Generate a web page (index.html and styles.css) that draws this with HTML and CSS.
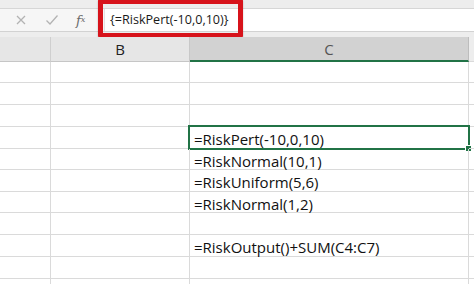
FILE: index.html
```html
<!DOCTYPE html>
<html>
<head>
<meta charset="utf-8">
<link rel="stylesheet" href="styles.css">
</head>
<body>
<div class="page">
  <div class="fbar">
    <div class="fbar-strip">
      <div class="fbar-icons">
        <span class="ic ic-x"><svg width="12" height="12" viewBox="0 0 12 12"><path d="M2 2L10 10M10 2L2 10" stroke="#b3b3b3" stroke-width="1.3" fill="none"/></svg></span>
        <span class="ic ic-check"><svg width="14" height="12" viewBox="0 0 14 12"><path d="M1.5 6.5L5 10L12.5 1.5" stroke="#b3b3b3" stroke-width="1.3" fill="none"/></svg></span>
        <span class="ic ic-fx"><i>f</i><sub>x</sub></span>
      </div>
      <div class="fbar-input">{=RiskPert(-10,0,10)}</div>
    </div>
    <div class="redbox"></div>
  </div>
  <div class="sheet">
    <div class="row hdr">
      <div class="cell ca"></div>
      <div class="cell cb">B</div>
      <div class="cell cc sel">C</div>
      <div class="cell cd"></div>
    </div>
    <div class="row h21"><div class="cell ca"></div><div class="cell cb"></div><div class="cell cc"></div><div class="cell cd"></div></div>
    <div class="row h22"><div class="cell ca"></div><div class="cell cb"></div><div class="cell cc"></div><div class="cell cd"></div></div>
    <div class="row h22"><div class="cell ca"></div><div class="cell cb"></div><div class="cell cc"></div><div class="cell cd"></div></div>
    <div class="row h22"><div class="cell ca"></div><div class="cell cb"></div><div class="cell cc active">=RiskPert(-10,0,10)<span class="selbox"><span class="handle"></span></span></div><div class="cell cd"></div></div>
    <div class="row h21"><div class="cell ca"></div><div class="cell cb"></div><div class="cell cc">=RiskNormal(10,1)</div><div class="cell cd"></div></div>
    <div class="row h22"><div class="cell ca"></div><div class="cell cb"></div><div class="cell cc">=RiskUniform(5,6)</div><div class="cell cd"></div></div>
    <div class="row h21"><div class="cell ca"></div><div class="cell cb"></div><div class="cell cc">=RiskNormal(1,2)</div><div class="cell cd"></div></div>
    <div class="row h22"><div class="cell ca"></div><div class="cell cb"></div><div class="cell cc"></div><div class="cell cd"></div></div>
    <div class="row h22"><div class="cell ca"></div><div class="cell cb"></div><div class="cell cc">=RiskOutput()+SUM(C4:C7)</div><div class="cell cd"></div></div>
    <div class="row h22"><div class="cell ca"></div><div class="cell cb"></div><div class="cell cc"></div><div class="cell cd"></div></div>
    <div class="row h22"><div class="cell ca"></div><div class="cell cb"></div><div class="cell cc"></div><div class="cell cd"></div></div>
  </div>
</div>
</body>
</html>
```
FILE: styles.css
```css
html, body {
  margin: 0;
  padding: 0;
  background: #ffffff;
}
.page {
  width: 474px;
  height: 284px;
  overflow: hidden;
  font-family: "Open Sans", "Noto Sans", sans-serif;
  color: #111;
}
.fbar {
  position: relative;
  height: 37px;
  background: #ededed;
  padding-top: 8px;
  box-sizing: border-box;
}
.fbar-strip {
  display: flex;
  height: 24px;
  box-sizing: border-box;
  border-top: 1px solid #d6d6d6;
  border-bottom: 1px solid #d2d2d2;
  background: #f6f6f6;
}
.fbar-icons {
  width: 104px;
  display: flex;
  align-items: center;
}
.ic {
  display: flex;
  align-items: center;
  justify-content: center;
}
.ic-x { width: 14px; margin-left: 14px; }
.ic-check { width: 16px; margin-left: 16px; }
.ic-fx {
  margin-left: 16px;
  font-family: "DejaVu Serif", "Liberation Serif", serif;
  color: #6a6a6a;
  font-size: 13px;
  line-height: 1;
}
.ic-fx i { font-style: italic; }
.ic-fx sub { font-size: 8px; font-style: italic; vertical-align: -1px; }
.fbar-input {
  flex: 1;
  background: #ffffff;
  font-size: 12.6px;
  line-height: 22px;
  padding-left: 5px;
  color: #1a1a1a;
  border-left: 1px solid #e2e2e2;
}
.redbox {
  position: absolute;
  left: 98px;
  top: -1px;
  width: 145px;
  height: 39px;
  box-sizing: border-box;
  border: 5px solid #d7131b;
  border-radius: 2px;
  box-shadow: 0 1px 2px rgba(0,0,0,0.25);
}
.sheet {
  display: flex;
  flex-direction: column;
}
.row {
  display: flex;
  box-sizing: border-box;
}
.row.h21 { height: 21px; }
.row.h22 { height: 22px; }
.row.hdr {
  height: 25px;
  background: #e6e6e6;
}
.cell {
  box-sizing: border-box;
  border-right: 1px solid #dadada;
  border-bottom: 1px solid #dadada;
  font-size: 15px;
  line-height: 24px;
  padding-left: 4px;
  white-space: nowrap;
  position: relative;
}
.ca { width: 51px; }
.cb { width: 139px; }
.cc { width: 279px; }
.cd { flex: 1; border-right: none; }
.hdr .cell {
  text-align: center;
  padding-left: 0;
  font-size: 15px;
  line-height: 25px;
  color: #222;
  border-bottom: 1px solid #c6c6c6;
}
.hdr .ca { background: #e6e6e6; border-right: 1px solid #cfcfcf; }
.hdr .cb { background: #e6e6e6; border-right: 1px solid #c8c8c8; }
.hdr .cc.sel {
  background: #d2d2d2;
  color: #555;
  border-bottom: 2px solid #217346;
  border-right: 1px solid #bdbdbd;
  line-height: 24px;
}
.hdr .cd { background: #ededed; border-bottom: 1px solid #dadada; }
.selbox {
  position: absolute;
  left: -2px;
  top: -2px;
  right: -2px;
  bottom: -2px;
  border: 2px solid #217346;
}
.handle {
  position: absolute;
  right: -4px;
  bottom: -4px;
  width: 5px;
  height: 5px;
  background: #217346;
  border: 1px solid #fff;
}
```
